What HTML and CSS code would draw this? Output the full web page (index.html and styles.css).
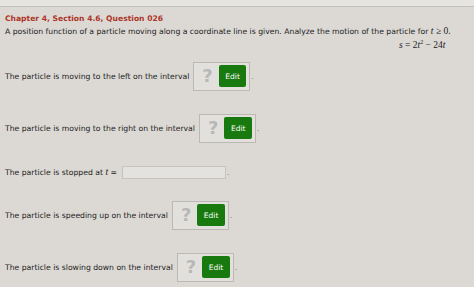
FILE: index.html
```html
<!DOCTYPE html>
<html>
<head>
<meta charset="utf-8">
<link rel="stylesheet" href="styles.css">
</head>
<body>
<div class="topbar"></div>
<div class="page">
  <div class="title">Chapter 4, Section 4.6, Question 026</div>
  <div class="intro">A position function of a particle moving along a coordinate line is given. Analyze the motion of the particle for <span class="m">t</span> <span class="mr">≥ 0.</span></div>
  <div class="formula"><span class="m">s</span> = 2<span class="m">t</span><sup>2</sup> − 24<span class="m">t</span></div>

  <div class="row r1">
    <span class="label">The particle is moving to the left on the interval</span>
    <span class="box"><span class="q">?</span><span class="edit">Edit</span></span>
    <span class="dot">.</span>
  </div>
  <div class="row r2">
    <span class="label">The particle is moving to the right on the interval</span>
    <span class="box"><span class="q">?</span><span class="edit">Edit</span></span>
    <span class="dot">.</span>
  </div>
  <div class="row r3">
    <span class="label">The particle is stopped at <span class="m">t</span> =</span>
    <span class="input"></span>
    <span class="dot">.</span>
  </div>
  <div class="row r4">
    <span class="label">The particle is speeding up on the interval</span>
    <span class="box"><span class="q">?</span><span class="edit">Edit</span></span>
    <span class="dot">.</span>
  </div>
  <div class="row r5">
    <span class="label">The particle is slowing down on the interval</span>
    <span class="box"><span class="q">?</span><span class="edit">Edit</span></span>
    <span class="dot">.</span>
  </div>
</div>
</body>
</html>
```
FILE: styles.css
```css
html, body {
  margin: 0;
  padding: 0;
}
body {
  width: 474px;
  height: 287px;
  overflow: hidden;
  background: #dcd9d5;
  font-family: "DejaVu Sans", Verdana, sans-serif;
  color: #222;
}
.topbar {
  height: 6px;
  background: #e6e4e1;
  border-bottom: 1px solid #c4c1bd;
}
.page {
  padding: 0 0 0 5px;
}
.title {
  margin-top: 7px;
  font-size: 7.6px;
  font-weight: bold;
  color: #ad3628;
  line-height: 10px;
}
.intro {
  margin-top: 2px;
  font-size: 7.7px;
  line-height: 10px;
  white-space: nowrap;
}
.m {
  font-family: "Liberation Serif", "Times New Roman", serif;
  font-style: italic;
  font-size: 9.5px;
}
.mr {
  font-family: "Liberation Serif", "Times New Roman", serif;
  font-size: 9.5px;
}
.formula {
  margin-left: 394px;
  margin-top: 3px;
  font-family: "Liberation Serif", "Times New Roman", serif;
  font-size: 9.5px;
  line-height: 11px;
  white-space: nowrap;
}
.formula sup {
  font-size: 6px;
  line-height: 0;
}
.row {
  display: flex;
  align-items: center;
  height: 30px;
  font-size: 7.7px;
  white-space: nowrap;
}
.r1 { margin-top: 10px; }
.r2 { margin-top: 22px; }
.r3 { margin-top: 14px; }
.r4 { margin-top: 13px; }
.r5 { margin-top: 22px; }
.label {
  margin-right: 4px;
}
.box {
  display: flex;
  align-items: center;
  box-sizing: border-box;
  width: 57px;
  height: 29px;
  border: 1px solid #bcb9b5;
  background: #e2e0dd;
  padding: 0 3px 0 8px;
  gap: 6px;
}
.q {
  font-family: "DejaVu Sans", sans-serif;
  font-size: 18px;
  font-weight: bold;
  color: #b8b8b8;
  line-height: 1;
}
.edit {
  display: flex;
  align-items: center;
  justify-content: center;
  width: 28px;
  height: 22px;
  background: #18790f;
  color: #fff;
  font-size: 7.5px;
  border-radius: 2px;
}
.input {
  display: block;
  box-sizing: border-box;
  width: 104px;
  height: 13px;
  border: 1px solid #c6c3bf;
  background: #e4e2df;
  margin-left: 1px;
}
.dot {
  margin-left: 1px;
  color: #777;
}
```
